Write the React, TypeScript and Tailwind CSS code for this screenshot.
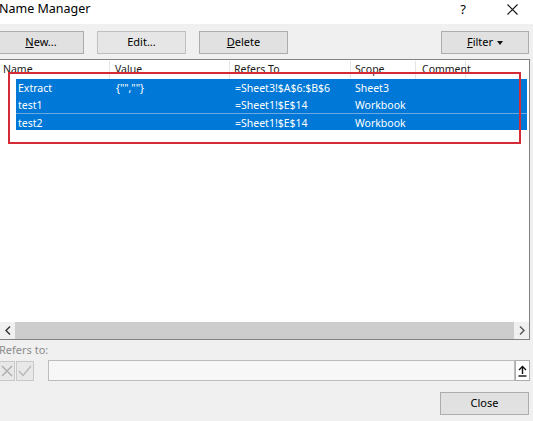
import React from 'react';

interface NameRow {
  name: string;
  value: string;
  refersTo: string;
  scope: string;
}

const rows: NameRow[] = [
  { name: 'Extract', value: '{"",""}', refersTo: '=Sheet3!$A$6:$B$6', scope: 'Sheet3' },
  { name: 'test1', value: '', refersTo: '=Sheet1!$E$14', scope: 'Workbook' },
  { name: 'test2', value: '', refersTo: '=Sheet1!$E$14', scope: 'Workbook' },
];

const font = { fontFamily: '"Noto Sans", "Open Sans", sans-serif' };

const btn =
  'h-[23px] flex items-center justify-center border border-[#adadad] bg-[#e1e1e1] text-[11px] text-black';

export default function App() {
  return (
    <div className="relative w-[533px] h-[421px] overflow-hidden bg-[#f0f0f0] select-none" style={font}>
      {/* title bar */}
      <div className="h-[24px] bg-white flex items-center">
        <span className="ml-[-1px] text-[12.5px] text-black leading-none mb-[5px]">Name Manager</span>
        <span className="ml-auto text-[13px] text-black leading-none mb-[5px]">?</span>
        <svg className="ml-[41px] mr-[15px] mb-[5px]" width="11" height="11" viewBox="0 0 11 11">
          <path d="M0.5 0.5 L10.5 10.5 M10.5 0.5 L0.5 10.5" stroke="#111" strokeWidth="1.1" />
        </svg>
      </div>

      {/* buttons */}
      <div className="mt-[7px] flex">
        <button className={`${btn} ml-[-2px] w-[86px]`}>
          <span><u>N</u>ew...</span>
        </button>
        <button className={`${btn} ml-[13px] w-[89px] border-[#bfbfbf] bg-[#e6e6e6] text-[#9a9a9a]`}>Edit...</button>
        <button className={`${btn} ml-[13px] w-[89px]`}>
          <span><u>D</u>elete</span>
        </button>
        <button className={`${btn} ml-auto mr-[4px] w-[88px]`}>
          <span><u>F</u>ilter</span>
          <svg className="ml-[4px]" width="6" height="4" viewBox="0 0 6 4">
            <path d="M0 0 H6 L3 4 Z" fill="#111" />
          </svg>
        </button>
      </div>

      {/* list panel */}
      <div className="mt-[5px] ml-[-1px] w-[531px] h-[281px] border border-[#828282] bg-white flex flex-col">
        <div className="h-[19px] flex text-[10.5px] text-[#1a1a1a] leading-[17px] pt-[1px]">
          <div className="w-[110px] pl-[3px] border-r border-[#e5e5e5]">Name</div>
          <div className="w-[120px] pl-[5px] border-r border-[#e5e5e5]">Value</div>
          <div className="w-[121px] pl-[4px] border-r border-[#e5e5e5]">Refers To</div>
          <div className="w-[65px] pl-[4px] border-r border-[#e5e5e5]">Scope</div>
          <div className="w-[50px] pl-[6px] border-r border-[#e5e5e5]">Comment</div>
          <div className="flex-1" />
        </div>
        <div className="flex-1">
          {rows.map((r, i) => (
            <div
              key={r.name}
              className={`ml-[16px] mr-[2px] flex bg-[#0078d7] text-white text-[10.5px] leading-[17px] h-[17px] pt-[1px] ${
                i === 2 ? 'border-t border-[#6aa8e0]' : ''
              }`}
            >
              <div className="w-[94px] pl-[2px]">{r.name}</div>
              <div className="w-[120px] pl-[6px]">{r.value}</div>
              <div className="w-[121px] pl-[5px]">{r.refersTo}</div>
              <div className="w-[65px] pl-[4px]">{r.scope}</div>
              <div className="flex-1" />
            </div>
          ))}
        </div>
        {/* horizontal scrollbar */}
        <div className="h-[17px] flex bg-[#f0f0f0]">
          <div className="w-[15px] flex items-center justify-center">
            <svg width="6" height="9" viewBox="0 0 6 9">
              <path d="M5 0.5 L1 4.5 L5 8.5" stroke="#333" strokeWidth="1.4" fill="none" />
            </svg>
          </div>
          <div className="flex-1 bg-[#cdcdcd]" />
          <div className="w-[15px] flex items-center justify-center">
            <svg width="6" height="9" viewBox="0 0 6 9">
              <path d="M1 0.5 L5 4.5 L1 8.5" stroke="#555" strokeWidth="1.4" fill="none" />
            </svg>
          </div>
        </div>
      </div>

      {/* refers to */}
      <div className="mt-[2px] ml-[-1px] text-[11px] leading-[16px] text-[#8c8c8c]">Refers to:</div>
      <div className="mt-[2px] flex items-center h-[21px]">
        <div className="ml-[-2px] w-[17px] h-[20px] border border-[#c8c8c8] bg-[#e8e8e8] flex items-center justify-center">
          <svg width="12" height="12" viewBox="0 0 12 12">
            <path d="M1 1 L11 11 M11 1 L1 11" stroke="#b0b0b0" strokeWidth="1.5" />
          </svg>
        </div>
        <div className="ml-[1px] w-[18px] h-[20px] border border-[#c8c8c8] bg-[#e8e8e8] flex items-center justify-center">
          <svg width="14" height="12" viewBox="0 0 14 12">
            <path d="M1 6 L5 10.5 L13 1" stroke="#b8b8b8" strokeWidth="1.4" fill="none" />
          </svg>
        </div>
        <div className="ml-[14px] w-[467px] h-[21px] border border-[#bcbcbc] bg-[#f7f7f7]" />
        <div className="w-[15px] h-[21px] border border-[#adadad] bg-white flex items-center justify-center">
          <svg width="9" height="12" viewBox="0 0 9 12">
            <path d="M4.5 1.5 L4.5 9" stroke="#111" strokeWidth="1.4" />
            <path d="M1 5 L4.5 1.5 L8 5" stroke="#111" strokeWidth="1.4" fill="none" />
            <path d="M0.5 11 H8.5" stroke="#111" strokeWidth="1.4" />
          </svg>
        </div>
      </div>

      {/* close */}
      <div className="mt-[11px] flex">
        <button className={`${btn} ml-auto mr-[4px] w-[89px]`}>Close</button>
      </div>

      {/* red highlight */}
      <div className="absolute left-[8px] top-[72px] w-[513px] h-[72px] border-2 border-[#d42b36] pointer-events-none" />
    </div>
  );
}
